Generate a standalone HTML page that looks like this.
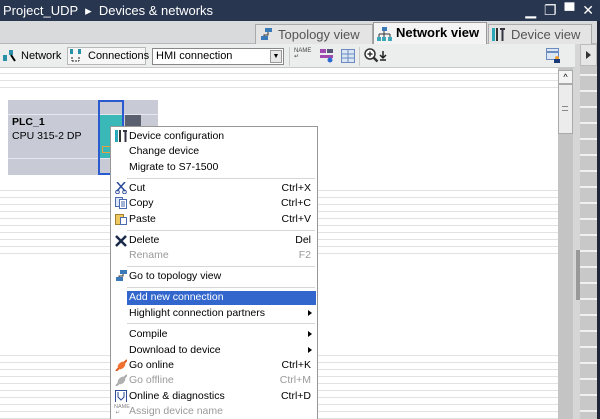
<!DOCTYPE html>
<html style="overflow:hidden;width:600px;height:419px"><head><style>
*{margin:0;padding:0;box-sizing:border-box}
body{width:600px;height:419px;overflow:hidden;position:relative;background:#d6d6d6;font-family:"Liberation Sans",sans-serif;font-size:11px;color:#000}
.abs{position:absolute}
.title{left:0;top:0;width:600px;height:21px;background:#283650;color:#fff;font-size:13px;line-height:21px;padding-left:3px}
.tabbar{left:0;top:21px;width:600px;height:23px;background:#d9dadb;border-bottom:1px solid #b8b8b8}
.tab{top:24px;height:20px;border:1px solid #aaa;border-bottom:none;font-size:13px;line-height:19px;padding-left:22px;color:#555;background:#e4e4e4}
.toolbar{left:0;top:44px;width:575px;height:24px;background:#eceded;border-bottom:1px solid #c8c8c8}
.canvas{left:0;top:68px;width:558px;height:351px;background:#fff}
.hl{position:absolute;left:0;height:1px;background:#e2e2e2}
.menu{left:110px;top:126px;width:208px;height:293px;background:#fff;border:1px solid #979797;border-bottom:none;overflow:hidden}
.mi{position:absolute;left:18px;width:186px;height:15px;line-height:15px;font-size:10.5px}
.mi .k{position:absolute;right:4px;top:0}
.dis{color:#9a9a9a}
.sep{position:absolute;left:16px;width:188px;height:1px;background:#d6d6d6}
.arr{position:absolute;right:3px;top:4px;width:0;height:0;border-left:4px solid #000;border-top:3.5px solid transparent;border-bottom:3.5px solid transparent}
.ic{position:absolute;left:4px;width:12px;height:12px}
</style></head><body>
<div class="abs title">Project_UDP &nbsp;▸&nbsp; Devices &amp; networks
<span style="position:absolute;right:4px;top:0;font-size:14px;letter-spacing:2px">▁ ❐ ▀ ✕</span></div>
<div class="abs tabbar"></div>
<div class="abs tab" style="left:255px;width:118px">Topology view
<svg class="abs" style="left:4px;top:3px" width="14" height="13"><rect x="5" y="0" width="7" height="4" fill="#3a7ab8"/><rect x="1" y="8" width="7" height="4" fill="#3a7ab8"/><path d="M8 4v3H4v1" stroke="#333" fill="none"/></svg></div>
<div class="abs tab" style="left:373px;top:22px;height:23px;width:114px;background:#f4f4f4;color:#000;font-weight:bold;border-color:#999">Network view
<svg class="abs" style="left:3px;top:4px" width="15" height="14"><rect x="5" y="0" width="5" height="4" fill="#3a7ab8"/><path d="M7 4v3M2 7h11M2 7v3M7 7v3M13 7v3" stroke="#333"/><rect x="0" y="10" width="4" height="4" fill="#3aa8b8"/><rect x="5" y="10" width="4" height="4" fill="#3aa8b8"/><rect x="11" y="10" width="4" height="4" fill="#3aa8b8"/></svg></div>
<div class="abs tab" style="left:488px;width:104px">Device view
<svg class="abs" style="left:3px;top:3px" width="14" height="13"><rect x="0" y="0" width="3" height="13" fill="#2aa8b8"/><rect x="4" y="0" width="2" height="13" fill="#333"/><path d="M8 1h5M10.5 1v12" stroke="#334" stroke-width="2"/></svg></div>
<div class="abs toolbar">
<svg class="abs" style="left:3px;top:6px" width="14" height="12"><rect x="0" y="5" width="4" height="6" fill="#2a8fa8"/><rect x="6" y="0" width="4" height="5" fill="#2a8fa8"/><path d="M8 5l4 6" stroke="#000" stroke-width="2"/></svg>
<span class="abs" style="left:21px;top:6px;font-size:11px">Network</span>
<div class="abs" style="left:67px;top:3px;width:79px;height:18px;border:1px solid #b8b8b8;background:#f6f6f6"></div>
<svg class="abs" style="left:70px;top:5px" width="12" height="13"><path d="M2 0v6M9 0v6M2 12h7M2 8v4M9 8v4" stroke="#222" stroke-dasharray="2 1"/><rect x="0" y="0" width="3" height="5" fill="#2a8fa8"/><rect x="8" y="0" width="3" height="5" fill="#2a8fa8"/></svg>
<span class="abs" style="left:88px;top:6px">Connections</span>
<div class="abs" style="left:152px;top:4px;width:132px;height:17px;border:1px solid #888;background:#fff;padding-left:3px;line-height:15px">HMI connection
<div class="abs" style="right:1px;top:1px;width:12px;height:13px;border:1px solid #999;background:#e8e8e8;font-size:7px;text-align:center;line-height:12px">▼</div></div>
<div class="abs" style="left:289px;top:3px;width:1px;height:19px;background:#ccc"></div>
<span class="abs" style="left:294px;top:4px;font-size:6px;line-height:6px;color:#444">NAME<br>↵</span>
<svg class="abs" style="left:320px;top:5px" width="14" height="14"><rect x="0" y="0" width="6" height="4" fill="#a04ab0"/><rect x="7" y="0" width="6" height="4" fill="#557"/><rect x="0" y="6" width="13" height="3" fill="#a04ab0"/><circle cx="10" cy="11" r="2.5" fill="#2a6ad0"/></svg>
<svg class="abs" style="left:341px;top:5px" width="14" height="14"><rect x="0.5" y="0.5" width="13" height="13" fill="#dbe6f5" stroke="#6a8ac0"/><path d="M0 5h14M0 9h14M7 0v14" stroke="#6a8ac0"/></svg>
<div class="abs" style="left:359px;top:3px;width:1px;height:19px;background:#ccc"></div>
<svg class="abs" style="left:364px;top:4px" width="24" height="16"><circle cx="6" cy="6" r="5" fill="#fff" stroke="#333" stroke-width="1.5"/><path d="M3.5 6h5M6 3.5v5" stroke="#333" stroke-width="1.5"/><path d="M9.5 9.5l4 4" stroke="#333" stroke-width="2.5"/><path d="M19 3v6M16 7l3 3 3-3M16 12h6" stroke="#222" stroke-width="1.5" fill="none"/></svg>
<svg class="abs" style="left:546px;top:4px" width="15" height="15"><rect x="0.5" y="0.5" width="12" height="11" fill="#dde7f3" stroke="#6a8ac0"/><path d="M0 4h13" stroke="#6a8ac0" stroke-width="2"/><circle cx="11" cy="10" r="2" fill="#f0a030"/><rect x="8" y="11" width="6" height="4" fill="#1a3a7a"/></svg>
</div>
<div class="abs canvas">
<div class="hl" style="top:5px;width:558px"></div><div class="hl" style="top:12px;width:558px"></div><div class="hl" style="top:19px;width:558px"></div>
</div>
<div class="abs" style="left:0;top:190px;width:558px;height:70px;background:repeating-linear-gradient(to bottom,#e2e2e2 0,#e2e2e2 1px,#fff 1px,#fff 7px)"></div>
<div class="abs" style="left:0;top:355px;width:558px;height:64px;background:repeating-linear-gradient(to bottom,#e2e2e2 0,#e2e2e2 1px,#fff 1px,#fff 7px)"></div>
<div class="abs" style="left:8px;top:100px;width:150px;height:75px;background:#c8cad6"></div>
<div class="abs" style="left:8px;top:114px;width:150px;height:1px;background:#e6e6ee"></div>
<div class="abs" style="left:8px;top:158px;width:150px;height:1px;background:#e6e6ee"></div>
<div class="abs" style="left:12px;top:116px;font-weight:bold;font-size:10.5px">PLC_1</div>
<div class="abs" style="left:12px;top:130px;font-size:10.5px">CPU 315-2 DP</div>
<div class="abs" style="left:100px;top:115px;width:22px;height:43px;background:#3ab8b8"></div>
<div class="abs" style="left:102px;top:146px;width:9px;height:7px;border:1px solid #e8a040"></div>
<div class="abs" style="left:125px;top:115px;width:16px;height:17px;background:#5a6070"></div>
<div class="abs" style="left:98px;top:100px;width:26px;height:75px;border:2px solid #2a5ad0"></div>
<div class="abs" style="left:558px;top:68px;width:15px;height:351px;background:#c4c4c4"></div>
<div class="abs" style="left:558px;top:70px;width:15px;height:14px;background:#f4f4f4;border:1px solid #aaa;font-size:9px;text-align:center;line-height:12px">^</div>
<div class="abs" style="left:558px;top:84px;width:15px;height:50px;background:#ececec;border:1px solid #aaa"></div>
<div class="abs" style="left:562px;top:106px;width:6px;height:5px;border-top:1px solid #888;border-bottom:1px solid #888"></div>
<div class="abs" style="left:576px;top:250px;width:4px;height:50px;background:#999"></div>
<div class="abs" style="left:580px;top:44px;width:17px;height:375px;background:repeating-linear-gradient(to bottom,#c8c8c8 0,#c8c8c8 14px,#f0f0f0 14px,#f0f0f0 16px)"></div>
<div class="abs" style="left:580px;top:44px;width:17px;height:22px;background:#e6e6e6;border:1px solid #bbb"></div>
<div class="abs" style="left:586px;top:51px;border-left:5px solid #333;border-top:4px solid transparent;border-bottom:4px solid transparent"></div>
<div class="abs" style="left:597px;top:21px;width:3px;height:398px;background:#1e2638"></div>
<div class="abs menu">
<svg class="ic" style="top:3px" width="13" height="13"><rect x="0" y="0" width="3" height="12" fill="#2aa8b8"/><rect x="4" y="0" width="2" height="12" fill="#333"/><path d="M8 1h5M10.5 1v11" stroke="#334" stroke-width="2"/></svg>
<div class="mi" style="top:2px">Device configuration</div>
<div class="mi" style="top:17px">Change device</div>
<div class="mi" style="top:33px">Migrate to S7-1500</div>
<div class="sep" style="top:51px"></div>
<svg class="ic" style="top:55px" width="12" height="12"><path d="M2 0l8 9M10 0L2 9" stroke="#2a4a9a" stroke-width="1.5"/><circle cx="2.5" cy="10" r="1.8" fill="none" stroke="#2a4a9a"/><circle cx="9.5" cy="10" r="1.8" fill="none" stroke="#2a4a9a"/></svg>
<div class="mi" style="top:54px">Cut<span class="k">Ctrl+X</span></div>
<svg class="ic" style="top:70px" width="12" height="12"><rect x="0.5" y="0.5" width="7" height="9" fill="#dfe8f6" stroke="#4a6ab0"/><rect x="4.5" y="2.5" width="7" height="9" fill="#fff" stroke="#4a6ab0"/><path d="M6 5h4M6 7h4M6 9h4" stroke="#4a6ab0"/></svg>
<div class="mi" style="top:69px">Copy<span class="k">Ctrl+C</span></div>
<svg class="ic" style="top:86px" width="12" height="12"><rect x="0.5" y="1.5" width="8" height="10" fill="#f0c860" stroke="#a08030"/><rect x="5.5" y="4.5" width="6" height="7" fill="#fff" stroke="#4a6ab0"/></svg>
<div class="mi" style="top:85px">Paste<span class="k">Ctrl+V</span></div>
<div class="sep" style="top:103px"></div>
<svg class="ic" style="top:108px" width="12" height="12"><path d="M1 1l10 10M11 1L1 11" stroke="#1a2a4a" stroke-width="2.5"/></svg>
<div class="mi" style="top:106px">Delete<span class="k">Del</span></div>
<div class="mi dis" style="top:121px">Rename<span class="k">F2</span></div>
<div class="sep" style="top:139px"></div>
<svg class="ic" style="top:143px" width="13" height="12"><rect x="5" y="0" width="7" height="4" fill="#3a7ab8"/><rect x="1" y="7" width="7" height="4" fill="#3a7ab8"/><path d="M8 4v2H4v1" stroke="#333" fill="none"/></svg>
<div class="mi" style="top:142px">Go to topology view</div>
<div class="sep" style="top:160px"></div>
<div class="abs" style="left:16px;top:164px;width:189px;height:14px;background:#3366cc"></div>
<div class="mi" style="top:163px;color:#fff">Add new connection</div>
<div class="mi" style="top:179px">Highlight connection partners<span class="arr"></span></div>
<div class="sep" style="top:196px"></div>
<div class="mi" style="top:200px">Compile<span class="arr"></span></div>
<div class="mi" style="top:216px">Download to device<span class="arr"></span></div>
<svg class="ic" style="top:232px" width="13" height="13"><path d="M1 12l4-4M8 5l4-4" stroke="#e05a20" stroke-width="2"/><ellipse cx="6.5" cy="6.5" rx="3" ry="4.5" transform="rotate(45 6.5 6.5)" fill="#f07030"/></svg>
<div class="mi" style="top:231px">Go online<span class="k">Ctrl+K</span></div>
<svg class="ic" style="top:247px" width="13" height="13"><path d="M1 12l4-4M8 5l4-4" stroke="#aaa" stroke-width="2"/><ellipse cx="6.5" cy="6.5" rx="3" ry="4.5" transform="rotate(45 6.5 6.5)" fill="#b0b0b0"/></svg>
<div class="mi dis" style="top:246px">Go offline<span class="k">Ctrl+M</span></div>
<svg class="ic" style="top:263px" width="12" height="13"><rect x="0.5" y="0.5" width="11" height="12" fill="#fff" stroke="#2a4a9a"/><path d="M3 2v5l3 3 3-3V2" stroke="#2a4a9a" fill="none"/></svg>
<div class="mi" style="top:262px">Online &amp; diagnostics<span class="k">Ctrl+D</span></div>
<span class="abs" style="left:3px;top:277px;font-size:5.5px;line-height:6px;color:#888">NAME<br>&nbsp;↵</span>
<div class="mi dis" style="top:277px">Assign device name</div>
</div>
</body></html>
